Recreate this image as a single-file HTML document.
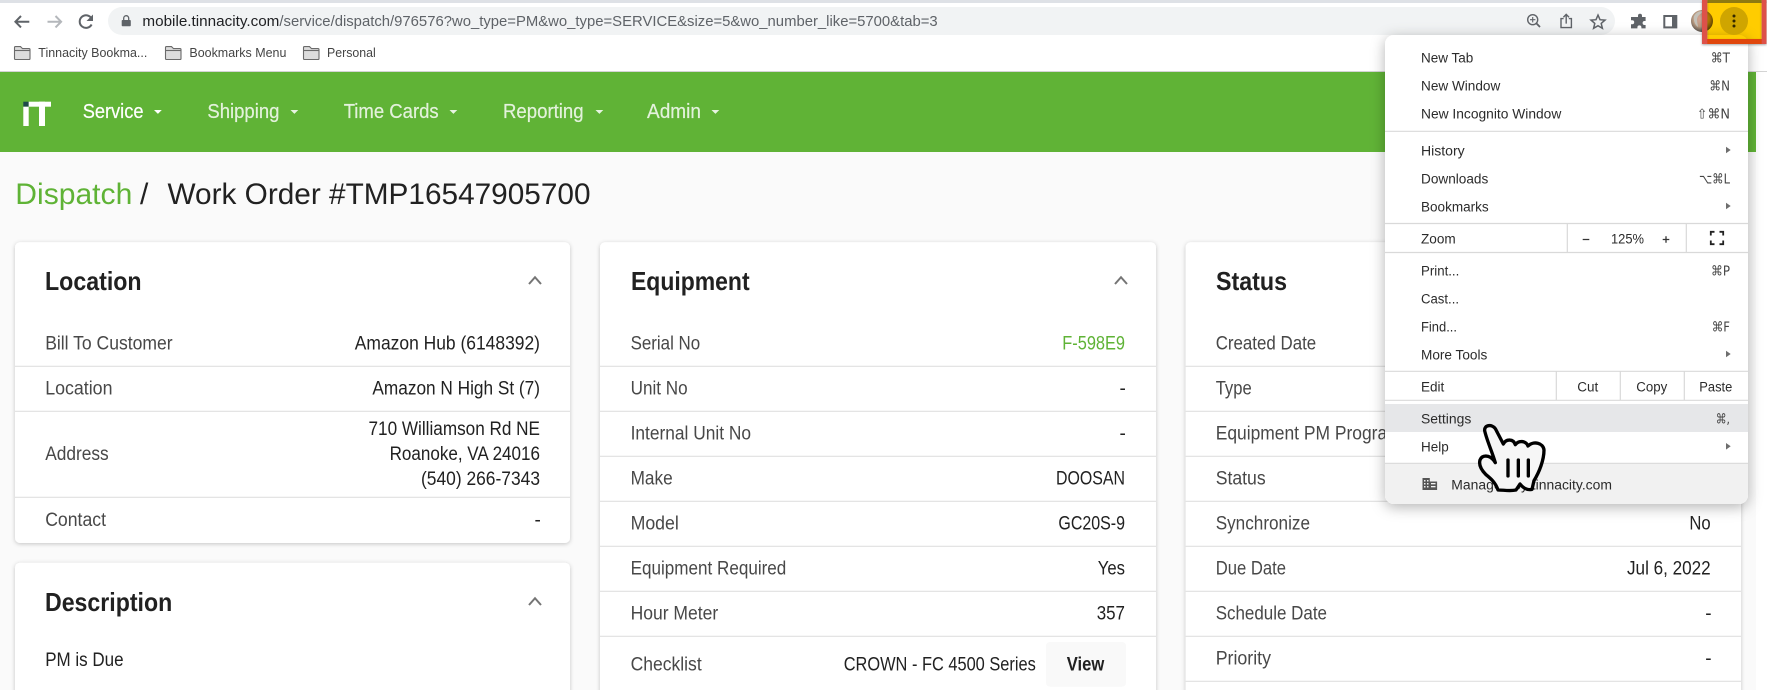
<!DOCTYPE html>
<html lang="en"><head><meta charset="utf-8"><title>Work Order</title>
<style>
html,body{margin:0;padding:0;background:#fafafa;width:1767px;height:690px;overflow:hidden}
svg{display:block;position:absolute;left:0;top:0}
text{font-family:"Liberation Sans",sans-serif;white-space:pre}
.l{font-size:19px;fill:#484848}
.v{font-size:19px;fill:#212121}
.h{font-size:26px;font-weight:bold;fill:#212121}
.n{font-size:20px;fill:#fff;fill-opacity:.82;stroke:#fff;stroke-width:.25;stroke-opacity:.6}
.m{font-size:13.5px;fill:#2b2b2b}
.s{font-size:13.5px;fill:#444;font-family:"DejaVu Sans","Liberation Sans",sans-serif}
.b{font-size:12.5px;fill:#444}
.sep{stroke:#e0e0e0;stroke-width:1.2}
.ms{stroke:#d9d9d9;stroke-width:1.2}
</style></head><body>
<svg width="1767" height="690" viewBox="0 0 1767 690" xmlns="http://www.w3.org/2000/svg">
<defs>
<filter id="card" x="-5%" y="-5%" width="110%" height="110%"><feDropShadow dx="0" dy="1" stdDeviation="2.2" flood-color="#000" flood-opacity=".22"/></filter>
<filter id="menu" x="-10%" y="-10%" width="120%" height="120%"><feDropShadow dx="0" dy="3" stdDeviation="7" flood-color="#000" flood-opacity=".3"/></filter>
<filter id="rs" x="-20%" y="-20%" width="140%" height="150%"><feDropShadow dx="0" dy="1" stdDeviation="1" flood-color="#000" flood-opacity=".35"/></filter>
<clipPath id="mc"><rect x="1385" y="35" width="363" height="469" rx="9"/></clipPath>
<radialGradient id="av" cx="45%" cy="40%" r="60%"><stop offset="0" stop-color="#d8a493"/><stop offset=".6" stop-color="#b99a80"/><stop offset="1" stop-color="#56504c"/></radialGradient>
</defs>

<rect width="1767" height="690" fill="#fafafa"/>
<!-- browser chrome -->
<rect width="1767" height="72" fill="#fff"/>
<rect width="1767" height="3" fill="#dee1e6"/>
<rect y="71" width="1767" height="1" fill="#d4d4d4"/>
<rect x="108" y="7" width="1507" height="28" rx="14" fill="#f1f3f4"/>
<g fill="none" stroke="#5f6368" stroke-width="2">
<path d="M15.5 21.7H29.3M21 16l-5.6 5.7 5.6 5.7"/>
<path d="M47.5 21.7H61M55.5 16l5.6 5.7-5.6 5.7" stroke="#b4b7bb"/>
<path d="M91.6 24.5a6.3 6.3 0 1 1-.1-6"/>
</g>
<path d="M93 14.5v6.5h-6.5z" fill="#5f6368"/>
<path d="M122.5 20h7.5a.8.8 0 0 1 .8.8v4.6a.8.8 0 0 1-.8.8h-7.5a.8.8 0 0 1-.8-.8v-4.6a.8.8 0 0 1 .8-.8z" fill="#5f6368"/>
<path d="M123.7 20v-1.8a2.5 2.5 0 0 1 5 0V20" fill="none" stroke="#5f6368" stroke-width="1.3"/>
<text x="142.4" y="26" font-size="15" fill="#202124" textLength="137" lengthAdjust="spacingAndGlyphs">mobile.tinnacity.com</text>
<text x="279.4" y="26" font-size="15" fill="#5f6368" textLength="658.3" lengthAdjust="spacingAndGlyphs">/service/dispatch/976576?wo_type=PM&amp;wo_type=SERVICE&amp;size=5&amp;wo_number_like=5700&amp;tab=3</text>

<!-- toolbar icons -->
<g fill="none" stroke="#5f6368" stroke-width="1.4">
<circle cx="1532.7" cy="19.7" r="5"/><path d="M1536.4 23.4l3.6 3.6" stroke-width="1.8"/><path d="M1530 19.7h5.4M1532.7 17v5.4" stroke-width="1.1"/>
<path d="M1563.6 18.6h-2.6v9h10.4v-9h-2.6M1566.2 23.6V14.8M1563.4 17.2l2.8-2.8 2.8 2.8"/>
<path d="M1598 15.1l2 4.6 5 .4-3.8 3.3 1.2 4.9-4.4-2.6-4.4 2.6 1.2-4.9-3.8-3.3 5-.4z" stroke-width="1.5"/>
</g>
<path d="M1635 17h3v-1.2a2 2 0 0 1 4 0V17h3.6v4h-1a2 2 0 0 0 0 4h1v3.4h-4.2v-1a2 2 0 0 0-4 0v1H1631v-4.2h1.2a2 2 0 0 0 0-4H1631V17z" fill="#5f6368"/>
<rect x="1664.3" y="16" width="12" height="11.4" fill="#fff" stroke="#5f6368" stroke-width="2"/>
<rect x="1672" y="16" width="5" height="11.4" fill="#5f6368"/>
<circle cx="1702" cy="21" r="11" fill="url(#av)"/>
<path d="M1694 16a9 9 0 0 1 12-4c-3 0-8 2-9 7 0 4 1 6 1 8-3-2-5-7-4-11z" fill="#c4c1b8"/>

<!-- bookmarks -->
<g stroke="#6a6a6a" stroke-width="1.1">
<path d="M14.5 58.5V47.6q0-1 1-1h5l2 2h6.5q1 0 1 1v9q0 .9-1 .9h-13.5q-1 0-1-1z" fill="#dcdcdc"/>
<path d="M14.5 50.5h15.5" fill="none"/>
<path d="M165.5 58.5V47.6q0-1 1-1h5l2 2h6.5q1 0 1 1v9q0 .9-1 .9h-13.5q-1 0-1-1z" fill="#dcdcdc"/>
<path d="M165.5 50.5h15.5" fill="none"/>
<path d="M303.5 58.5V47.6q0-1 1-1h5l2 2h6.5q1 0 1 1v9q0 .9-1 .9h-13.5q-1 0-1-1z" fill="#dcdcdc"/>
<path d="M303.5 50.5h15.5" fill="none"/>
</g>
<text class="b" x="38.3" y="57" textLength="109" lengthAdjust="spacingAndGlyphs">Tinnacity Bookma...</text>
<text class="b" x="189.4" y="57" textLength="97" lengthAdjust="spacingAndGlyphs">Bookmarks Menu</text>
<text class="b" x="327" y="57" textLength="48.8" lengthAdjust="spacingAndGlyphs">Personal</text>

<!-- nav bar -->
<rect y="72" width="1756" height="80" fill="#60b336"/>
<rect x="1756" y="72" width="11" height="618" fill="#fff"/>
<rect x="23.3" y="101.700" width="5.400" height="5" fill="#1f4a4a"/>
<rect x="23.3" y="106.700" width="5.400" height="19.300" fill="#fff"/>
<rect x="28.700" y="101.700" width="22.300" height="5" fill="#fff"/>
<rect x="39" y="101.700" width="6" height="24.300" fill="#fff"/>
<text class="n" style="fill-opacity:1;stroke-opacity:.8" x="82.7" y="118" textLength="60.8" lengthAdjust="spacingAndGlyphs">Service</text>
<text class="n" x="207.4" y="118" textLength="72" lengthAdjust="spacingAndGlyphs">Shipping</text>
<text class="n" x="343.7" y="118" textLength="95" lengthAdjust="spacingAndGlyphs">Time Cards</text>
<text class="n" x="503" y="118" textLength="80.6" lengthAdjust="spacingAndGlyphs">Reporting</text>
<text class="n" x="647" y="118" textLength="54" lengthAdjust="spacingAndGlyphs">Admin</text>
<g fill="#fff" fill-opacity=".85">
<path d="M154 110h7.8l-3.9 3.9z" fill-opacity="1"/><path d="M290.5 110h7.8l-3.9 3.9z"/><path d="M449.5 110h7.8l-3.9 3.9z"/><path d="M595.5 110h7.8l-3.9 3.9z"/><path d="M711.5 110h7.8l-3.9 3.9z"/>
</g>

<!-- heading -->
<text x="15.3" y="204" font-size="30" fill="#5fb336" textLength="117" lengthAdjust="spacingAndGlyphs">Dispatch</text>
<text x="140" y="204" font-size="30" fill="#212121">/</text>
<text x="167.5" y="204" font-size="30" fill="#212121" textLength="423" lengthAdjust="spacingAndGlyphs">Work Order #TMP16547905700</text>

<!-- cards -->
<rect x="15" y="242.3" width="555" height="300.7" rx="5" fill="#fff" filter="url(#card)"/>
<rect x="15" y="562.7" width="555" height="140" rx="5" fill="#fff" filter="url(#card)"/>
<rect x="600" y="242.3" width="556" height="460" rx="5" fill="#fff" filter="url(#card)"/>
<rect x="1185.6" y="242.3" width="555.4" height="460" rx="5" fill="#fff" filter="url(#card)"/>

<path class="sep" d="M15 366.3H570M15 411.3H570M15 497.3H570"/>
<path class="sep" d="M600 366.3H1156M600 411.3H1156M600 456.3H1156M600 501.3H1156M600 546.3H1156M600 591.3H1156M600 636.3H1156"/>
<path class="sep" d="M1185.6 366.3H1741M1185.6 411.3H1741M1185.6 456.3H1741M1185.6 501.3H1741M1185.6 546.3H1741M1185.6 591.3H1741M1185.6 636.3H1741M1185.6 681.3H1741"/>
<g fill="none" stroke="#757575" stroke-width="2">
<path d="M529 284l6-6.800 6 6.800"/><path d="M529 605l6-6.800 6 6.800"/><path d="M1115 284l6-6.800 6 6.800"/>
</g>

<!-- Location card -->
<text class="h" x="45" y="290" textLength="96.6" lengthAdjust="spacingAndGlyphs">Location</text>
<text class="l" x="45.2" y="349.300" textLength="127.400" lengthAdjust="spacingAndGlyphs">Bill To Customer</text>
<text class="v" x="354.800" y="349.300" textLength="185.200" lengthAdjust="spacingAndGlyphs">Amazon Hub (6148392)</text>
<text class="l" x="45.2" y="394.300" textLength="67.300" lengthAdjust="spacingAndGlyphs">Location</text>
<text class="v" x="372.400" y="394.300" textLength="167.600" lengthAdjust="spacingAndGlyphs">Amazon N High St (7)</text>
<text class="l" x="45.2" y="460" textLength="63.500" lengthAdjust="spacingAndGlyphs">Address</text>
<text class="v" x="368.500" y="435" textLength="171.500" lengthAdjust="spacingAndGlyphs">710 Williamson Rd NE</text>
<text class="v" x="389.600" y="460" textLength="150.400" lengthAdjust="spacingAndGlyphs">Roanoke, VA 24016</text>
<text class="v" x="421" y="485" textLength="119" lengthAdjust="spacingAndGlyphs">(540) 266-7343</text>
<text class="l" x="45.2" y="526" textLength="60.800" lengthAdjust="spacingAndGlyphs">Contact</text>
<text class="v" x="534.500" y="526">-</text>

<!-- Description -->
<text class="h" x="45" y="611" textLength="127.200" lengthAdjust="spacingAndGlyphs">Description</text>
<text class="v" x="45.200" y="666" textLength="78.400" lengthAdjust="spacingAndGlyphs">PM is Due</text>

<!-- Equipment -->
<text class="h" x="631" y="290" textLength="118.600" lengthAdjust="spacingAndGlyphs">Equipment</text>
<text class="l" x="630.600" y="349.300" textLength="69.600" lengthAdjust="spacingAndGlyphs">Serial No</text>
<text class="v" style="fill:#5fb336" x="1062.300" y="349.300" textLength="62.700" lengthAdjust="spacingAndGlyphs">F-598E9</text>
<text class="l" x="630.600" y="394.300" textLength="57" lengthAdjust="spacingAndGlyphs">Unit No</text>
<text class="v" x="1119.500" y="394.300">-</text>
<text class="l" x="630.600" y="439.300" textLength="120.400" lengthAdjust="spacingAndGlyphs">Internal Unit No</text>
<text class="v" x="1119.500" y="439.300">-</text>
<text class="l" x="630.600" y="484.300" textLength="42.100" lengthAdjust="spacingAndGlyphs">Make</text>
<text class="v" x="1056" y="484.300" textLength="69" lengthAdjust="spacingAndGlyphs">DOOSAN</text>
<text class="l" x="630.600" y="529.300" textLength="48.200" lengthAdjust="spacingAndGlyphs">Model</text>
<text class="v" x="1058.400" y="529.300" textLength="66.600" lengthAdjust="spacingAndGlyphs">GC20S-9</text>
<text class="l" x="630.600" y="574.300" textLength="155.700" lengthAdjust="spacingAndGlyphs">Equipment Required</text>
<text class="v" x="1097.800" y="574.300" textLength="27.200" lengthAdjust="spacingAndGlyphs">Yes</text>
<text class="l" x="630.600" y="619.300" textLength="87.600" lengthAdjust="spacingAndGlyphs">Hour Meter</text>
<text class="v" x="1096.700" y="619.300" textLength="28.300" lengthAdjust="spacingAndGlyphs">357</text>
<text class="l" x="630.600" y="670.300" textLength="71.100" lengthAdjust="spacingAndGlyphs">Checklist</text>
<text class="v" x="843.700" y="670.300" textLength="192.100" lengthAdjust="spacingAndGlyphs">CROWN - FC 4500 Series</text>
<rect x="1046" y="642" width="80" height="44.700" rx="4" fill="#f9f9f9"/>
<text class="v" style="font-weight:bold" x="1066.800" y="670.300" textLength="37.500" lengthAdjust="spacingAndGlyphs">View</text>

<!-- Status -->
<text class="h" x="1216" y="290" textLength="71" lengthAdjust="spacingAndGlyphs">Status</text>
<text class="l" x="1215.700" y="349.300" textLength="100.500" lengthAdjust="spacingAndGlyphs">Created Date</text>
<text class="l" x="1215.700" y="394.300" textLength="36" lengthAdjust="spacingAndGlyphs">Type</text>
<text class="l" x="1215.700" y="439.300" textLength="186" lengthAdjust="spacingAndGlyphs">Equipment PM Program</text>
<text class="l" x="1215.700" y="484.300" textLength="50" lengthAdjust="spacingAndGlyphs">Status</text>
<text class="l" x="1215.700" y="529.300" textLength="94.300" lengthAdjust="spacingAndGlyphs">Synchronize</text>
<text class="v" x="1689.400" y="529.300" textLength="21.300" lengthAdjust="spacingAndGlyphs">No</text>
<text class="l" x="1215.700" y="574.300" textLength="70.300" lengthAdjust="spacingAndGlyphs">Due Date</text>
<text class="v" x="1627" y="574.300" textLength="83.700" lengthAdjust="spacingAndGlyphs">Jul 6, 2022</text>
<text class="l" x="1215.700" y="619.300" textLength="111.300" lengthAdjust="spacingAndGlyphs">Schedule Date</text>
<text class="v" x="1705.200" y="619.300">-</text>
<text class="l" x="1215.700" y="664.300" textLength="55.300" lengthAdjust="spacingAndGlyphs">Priority</text>
<text class="v" x="1705.200" y="664.300">-</text>

<!-- chrome menu -->
<rect x="1385" y="35" width="363" height="469" rx="9" fill="#fff" filter="url(#menu)"/>
<g clip-path="url(#mc)">
<rect x="1385" y="404" width="363" height="28" fill="#e6e7e9"/>
<rect x="1385" y="463" width="363" height="41" fill="#f1f1f1"/>
</g>
<path class="ms" d="M1385 131.300H1748M1385 223.500H1748M1385 252.500H1748M1385 371.300H1748M1385 400.300H1748M1385 463.300H1748"/>
<path class="ms" d="M1567.300 223.500V252.500M1686.300 223.500V252.500M1556.300 371.300V400.300M1620.300 371.300V400.300M1684.300 371.300V400.300"/>
<text class="m" x="1421" y="62.300" textLength="52.300" lengthAdjust="spacingAndGlyphs">New Tab</text>
<text class="m" x="1421" y="90.300" textLength="79.300" lengthAdjust="spacingAndGlyphs">New Window</text>
<text class="m" x="1421" y="118.300" textLength="140.300" lengthAdjust="spacingAndGlyphs">New Incognito Window</text>
<text class="m" x="1421" y="155.300" textLength="43.700" lengthAdjust="spacingAndGlyphs">History</text>
<text class="m" x="1421" y="183.300" textLength="67.300" lengthAdjust="spacingAndGlyphs">Downloads</text>
<text class="m" x="1421" y="211.300" textLength="67.700" lengthAdjust="spacingAndGlyphs">Bookmarks</text>
<text class="m" x="1421" y="243.300" textLength="34.700" lengthAdjust="spacingAndGlyphs">Zoom</text>
<text class="m" x="1611" y="243.300" textLength="33" lengthAdjust="spacingAndGlyphs">125%</text>
<text class="m" x="1421" y="275.300" textLength="38.300" lengthAdjust="spacingAndGlyphs">Print...</text>
<text class="m" x="1421" y="303.300" textLength="38" lengthAdjust="spacingAndGlyphs">Cast...</text>
<text class="m" x="1421" y="331.300" textLength="36" lengthAdjust="spacingAndGlyphs">Find...</text>
<text class="m" x="1421" y="359.300" textLength="66.300" lengthAdjust="spacingAndGlyphs">More Tools</text>
<text class="m" x="1421" y="391.300" textLength="23.300" lengthAdjust="spacingAndGlyphs">Edit</text>
<text class="m" x="1577.300" y="391.300" textLength="21" lengthAdjust="spacingAndGlyphs">Cut</text>
<text class="m" x="1636.300" y="391.300" textLength="31" lengthAdjust="spacingAndGlyphs">Copy</text>
<text class="m" x="1699.300" y="391.300" textLength="33" lengthAdjust="spacingAndGlyphs">Paste</text>
<text class="m" x="1421" y="423.300" textLength="50.300" lengthAdjust="spacingAndGlyphs">Settings</text>
<text class="m" x="1421" y="451.300" textLength="27.700" lengthAdjust="spacingAndGlyphs">Help</text>
<text class="m" x="1451.300" y="489.300" textLength="160.700" lengthAdjust="spacingAndGlyphs">Managed by tinnacity.com</text>
<text class="s" x="1710.700" y="62.300" textLength="19.300" lengthAdjust="spacingAndGlyphs">⌘T</text>
<text class="s" x="1709.300" y="90.300" textLength="20.700" lengthAdjust="spacingAndGlyphs">⌘N</text>
<text class="s" x="1696.700" y="118.300" textLength="33.300" lengthAdjust="spacingAndGlyphs">⇧⌘N</text>
<text class="s" x="1699" y="183.300" textLength="31" lengthAdjust="spacingAndGlyphs">⌥⌘L</text>
<text class="s" x="1711" y="275.300" textLength="19" lengthAdjust="spacingAndGlyphs">⌘P</text>
<text class="s" x="1711.700" y="331.300" textLength="18.300" lengthAdjust="spacingAndGlyphs">⌘F</text>
<text class="s" x="1715.700" y="423.300" textLength="14.300" lengthAdjust="spacingAndGlyphs">⌘,</text>
<g fill="#6e6e6e">
<path d="M1726 146.700l4.700 3.300-4.700 3.300z"/><path d="M1726 202.700l4.700 3.300-4.700 3.300z"/><path d="M1726 350.700l4.700 3.300-4.700 3.300z"/><path d="M1726 443l4.700 3.300-4.700 3.300z"/>
</g>
<path d="M1582.700 239.500h6.600M1662.700 239.500h6.600M1666 236.200v6.600" stroke="#333" stroke-width="1.300" fill="none"/>
<path d="M1710.800 235.500V231.800h3.700M1719.500 231.800h3.700v3.700M1723.200 240.500v3.700h-3.700M1714.500 244.200h-3.700v-3.700" fill="none" stroke="#222" stroke-width="1.800"/>
<path d="M1422.500 490V478h7.300v3.500h7.300V490z" fill="#555"/>
<g fill="#f1f1f1"><rect x="1424" y="480" width="1.500" height="1.500"/><rect x="1427" y="480" width="1.500" height="1.500"/><rect x="1424" y="483" width="1.500" height="1.500"/><rect x="1427" y="483" width="1.500" height="1.500"/><rect x="1424" y="486" width="1.500" height="1.500"/><rect x="1427" y="486" width="1.500" height="1.500"/><rect x="1431" y="483" width="4.500" height="1.300"/><rect x="1431" y="486" width="4.500" height="1.300"/></g>

<!-- hand cursor -->
<g transform="translate(1470 410) scale(.3333)">
<path d="M44 62C42 44 66 42 76 56L100 102C108 86 130 86 136 104C146 90 168 92 174 108C190 92 220 98 222 120C222 150 208 186 192 212L186 238C170 242 158 232 150 222L138 240C120 244 100 240 84 240C76 216 60 204 48 194C34 180 26 164 30 150C36 134 58 134 72 152L76 158C66 124 50 90 44 62Z" fill="#f6f6f6" stroke="#000" stroke-width="10" stroke-linejoin="round"/>
<path d="M114 150V198M145 150V198M175 150V198" stroke="#000" stroke-width="10" fill="none" stroke-linecap="round"/>
</g>

<!-- highlight -->
<circle cx="1734" cy="21" r="14" fill="#cfcfcf"/>
<g fill="#333"><circle cx="1734" cy="16" r="1.500"/><circle cx="1734" cy="21" r="1.500"/><circle cx="1734" cy="26" r="1.500"/></g>
<rect x="1707.300" y="0" width="54.400" height="39" fill="#ffcc00" style="mix-blend-mode:multiply"/>
<rect x="1707.300" y="0" width="54.400" height="3" fill="#8f7a10"/>
<g filter="url(#rs)">
<path d="M1702 0h5.300v39h54.400V0h4.800v44H1702z" fill="#dd5149"/>
<rect x="1707.300" y="39" width="54.400" height="5" fill="#e0460f"/>
</g>
</svg>
</body></html>
